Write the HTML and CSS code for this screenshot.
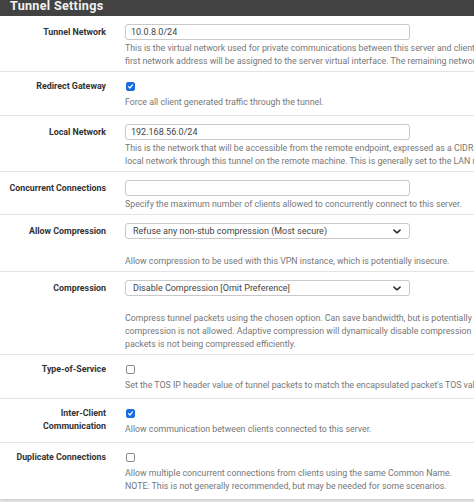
FILE: index.html
```
<!DOCTYPE html>
<html>
<head>
<meta charset="utf-8">
<link rel="stylesheet" href="styles.css">
</head>
<body>
<div class="panel">
  <div class="panel-heading">Tunnel Settings</div>

  <div class="row row-input">
    <div class="label">Tunnel Network</div>
    <div class="value">
      <div class="input">10.0.8.0/24</div>
      <div class="help">This is the virtual network used for private communications between this server and client hosts expressed using CIDR notation (e.g. 10.0.8.0/24). The<br>first network address will be assigned to the server virtual interface. The remaining network addresses can optionally be assigned to connecting clients.</div>
    </div>
  </div>

  <div class="row row-check">
    <div class="label">Redirect Gateway</div>
    <div class="value">
      <div class="check-line"><span class="cb checked"><svg viewBox="0 0 10 10"><polyline points="2.3,5.2 4.2,7.2 7.8,2.8"/></svg></span></div>
      <div class="help">Force all client generated traffic through the tunnel.</div>
    </div>
  </div>

  <div class="row row-input">
    <div class="label">Local Network</div>
    <div class="value">
      <div class="input">192.168.56.0/24</div>
      <div class="help">This is the network that will be accessible from the remote endpoint, expressed as a CIDR range. This may be left blank if not adding a route to the<br>local network through this tunnel on the remote machine. This is generally set to the LAN network.</div>
    </div>
  </div>

  <div class="row row-input">
    <div class="label">Concurrent Connections</div>
    <div class="value">
      <div class="input"></div>
      <div class="help">Specify the maximum number of clients allowed to concurrently connect to this server.</div>
    </div>
  </div>

  <div class="row row-select">
    <div class="label">Allow Compression</div>
    <div class="value">
      <div class="select"><span>Refuse any non-stub compression (Most secure)</span><svg class="chev" viewBox="0 0 10 6"><polyline points="1.2,1.2 5,4.6 8.8,1.2"/></svg></div>
      <div class="help">Allow compression to be used with this VPN instance, which is potentially insecure.</div>
    </div>
  </div>

  <div class="row row-select">
    <div class="label">Compression</div>
    <div class="value">
      <div class="select"><span>Disable Compression [Omit Preference]</span><svg class="chev" viewBox="0 0 10 6"><polyline points="1.2,1.2 5,4.6 8.8,1.2"/></svg></div>
      <div class="help">Compress tunnel packets using the chosen option. Can save bandwidth, but is potentially dangerous and insecure. This option is ignored when<br>compression is not allowed. Adaptive compression will dynamically disable compression for a period of time if OpenVPN detects that the data in the<br>packets is not being compressed efficiently.</div>
    </div>
  </div>

  <div class="row row-check">
    <div class="label">Type-of-Service</div>
    <div class="value">
      <div class="check-line"><span class="cb"></span></div>
      <div class="help">Set the TOS IP header value of tunnel packets to match the encapsulated packet's TOS value.</div>
    </div>
  </div>

  <div class="row row-check">
    <div class="label">Inter-Client<br>Communication</div>
    <div class="value">
      <div class="check-line"><span class="cb checked"><svg viewBox="0 0 10 10"><polyline points="2.3,5.2 4.2,7.2 7.8,2.8"/></svg></span></div>
      <div class="help">Allow communication between clients connected to this server.</div>
    </div>
  </div>

  <div class="row row-check last">
    <div class="label">Duplicate Connections</div>
    <div class="value">
      <div class="check-line"><span class="cb"></span></div>
      <div class="help">Allow multiple concurrent connections from clients using the same Common Name.<br>NOTE: This is not generally recommended, but may be needed for some scenarios.</div>
    </div>
  </div>
</div>
</body>
</html>
```

FILE: styles.css
```
html, body {
  margin: 0;
  padding: 0;
  overflow: hidden;
  background: #ebebeb;
}

body {
  font-family: Roboto, "Liberation Sans", sans-serif;
  width: 474px;
  height: 502px;
}

.panel {
  width: 640px;
  background: #fff;
  box-shadow: 0 1px 3px rgba(0, 0, 0, 0.18);
}

.panel-heading {
  height: 16px;
  background: #424242;
  color: #f2f2f2;
  font-weight: 700;
  font-size: 12.6px;
  line-height: 12px;
  padding-left: 10px;
  letter-spacing: 0.3px;
}

.row {
  display: flex;
  border-bottom: 1px solid #e4e4e4;
  padding-top: 8px;
  padding-bottom: 3px;
}

.row-check {
  padding-bottom: 6px;
}

.row.last {
  border-bottom: none;
  padding-bottom: 6px;
}

.label {
  width: 106px;
  flex: none;
  text-align: right;
  font-weight: 700;
  font-size: 8.85px;
  line-height: 13px;
  color: #333;
  padding-top: 2px;
}

.row-check .label {
  padding-top: 0;
}

.value {
  margin-left: 19px;
  flex: none;
  width: 500px;
}

.input {
  width: 285px;
  height: 16px;
  box-sizing: border-box;
  border: 1px solid #c9c9c9;
  border-radius: 3px;
  background: #fff;
  font-size: 9px;
  line-height: 14px;
  padding-left: 5px;
  color: #444;
}

.select {
  width: 285px;
  height: 16px;
  box-sizing: border-box;
  border: 1px solid #c9c9c9;
  border-radius: 3px;
  background: #fff;
  font-size: 9px;
  line-height: 14px;
  padding-left: 7px;
  padding-right: 8px;
  color: #444;
  display: flex;
  align-items: center;
  justify-content: space-between;
}

.chev {
  width: 8px;
  height: 5px;
  fill: none;
  stroke: #333;
  stroke-width: 2;
  stroke-linecap: round;
  stroke-linejoin: round;
}

.help {
  margin-top: 2px;
  font-size: 8.8px;
  line-height: 13px;
  color: #777;
  white-space: nowrap;
}

.row-select .help {
  margin-top: 16px;
}

.row-check .help {
  margin-top: 3px;
}

.check-line {
  height: 13px;
  display: flex;
  align-items: center;
  padding-left: 1px;
}

.cb {
  width: 9px;
  height: 9px;
  box-sizing: border-box;
  border: 1px solid #8a8a8a;
  border-radius: 2px;
  background: #fff;
  display: block;
}

.cb.checked {
  background: #1a6fe0;
  border-color: #1a6fe0;
}

.cb svg {
  display: block;
  width: 7px;
  height: 7px;
  fill: none;
  stroke: #fff;
  stroke-width: 1.8;
  stroke-linecap: round;
  stroke-linejoin: round;
}
```
